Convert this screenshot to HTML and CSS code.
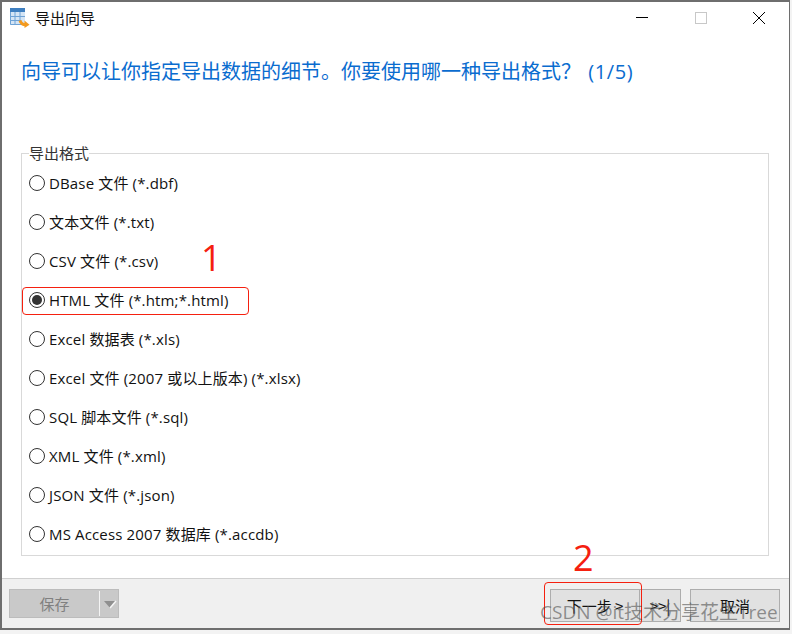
FILE: index.html
```html
<!DOCTYPE html>
<html lang="zh">
<head>
<meta charset="utf-8">
<title>导出向导</title>
<link rel="stylesheet" href="styles.css">
</head>
<body>
<div class="window">
  <header class="titlebar">
    <svg class="app-icon" width="20" height="20" viewBox="0 0 20 20">
      <rect x="0" y="0" width="15" height="4" fill="#3f7fc0"/>
      <rect x="0" y="4" width="15" height="13" fill="#d5e5f5"/>
      <path d="M0.5 4v12.5h14.5M5 4v13M10 4v9M0 8.5h15M0 12.5h11" fill="none" stroke="#6fa3d6" stroke-width="1"/>
      <path d="M10 12.5c1 3 3 4.3 5.5 4.3" fill="none" stroke="#f39a1e" stroke-width="3"/>
      <path d="M14.5 12.5l5 4.3-5 3.2z" fill="#f39a1e"/>
    </svg>
    <span class="title">导出向导</span>
    <div class="controls">
      <svg class="ctl" width="14" height="14" viewBox="0 0 14 14"><path d="M1 6.5h12" stroke="#000" stroke-width="1"/></svg>
      <svg class="ctl" width="14" height="14" viewBox="0 0 14 14"><rect x="1.5" y="1.5" width="11" height="11" fill="none" stroke="#c8c8c8"/></svg>
      <svg class="ctl" width="14" height="14" viewBox="0 0 14 14"><path d="M1 1l12 12M13 1L1 13" stroke="#000" stroke-width="1"/></svg>
    </div>
  </header>
  <h1 class="heading">向导可以让你指定导出数据的细节。你要使用哪一种导出格式？ <span class="step">(1/5)</span></h1>
  <main class="content">
    <fieldset class="group">
      <legend class="legend">导出格式</legend>
      <label class="row"><span class="radio"></span>DBase 文件 (*.dbf)</label>
      <label class="row"><span class="radio"></span>文本文件 (*.txt)</label>
      <label class="row"><span class="radio"></span>CSV 文件 (*.csv)</label>
      <label class="row"><span class="radio checked"></span>HTML 文件 (*.htm;*.html)</label>
      <label class="row"><span class="radio"></span>Excel 数据表 (*.xls)</label>
      <label class="row"><span class="radio"></span>Excel 文件 (2007 或以上版本) (*.xlsx)</label>
      <label class="row"><span class="radio"></span>SQL 脚本文件 (*.sql)</label>
      <label class="row"><span class="radio"></span>XML 文件 (*.xml)</label>
      <label class="row"><span class="radio"></span>JSON 文件 (*.json)</label>
      <label class="row"><span class="radio"></span>MS Access 2007 数据库 (*.accdb)</label>
    </fieldset>
  </main>
  <footer class="footer">
    <div class="save">
      <span class="save-label">保存</span>
      <svg class="save-arrow" width="14" height="10" viewBox="0 0 14 10">
        <path d="M1 1h12L7 8z" fill="#8f8f8f"/>
        <path d="M13 1L7 8" stroke="#f6f6f6" stroke-width="1.6"/>
      </svg>
    </div>
    <div class="nav">
      <button class="btn next">下一步 &gt;</button>
      <button class="btn last">&gt;&gt;|</button>
      <button class="btn cancel">取消</button>
    </div>
  </footer>
</div>
<div class="mark num-one">1</div>
<div class="mark num-two">2</div>
<div class="box box-html"></div>
<div class="box box-next"></div>
<div class="watermark">CSDN @it技术分享花生Tree</div>
</body>
</html>
```
FILE: styles.css
```css
* { box-sizing: border-box; }
html, body { margin: 0; padding: 0; }
body {
  position: relative;
  width: 792px;
  height: 634px;
  overflow: hidden;
  background: #f3f3f3;
  font-family: "Open Sans", "Noto Sans CJK SC", sans-serif;
  color: #111;
}
.window {
  width: 790px;
  height: 630px;
  background: #fff;
  border: 1px solid #6e6e6e;
  border-left-width: 2px;
  border-top-width: 2px;
  border-bottom-width: 2px;
  display: flex;
  flex-direction: column;
}
.titlebar {
  height: 31px;
  flex: none;
  display: flex;
  align-items: center;
  padding-left: 8px;
}
.app-icon { margin-right: 5px; }
.title { font-size: 15px; font-family: "Noto Sans CJK SC", sans-serif; }
.controls {
  margin-left: auto;
  display: flex;
  gap: 44.5px;
  padding-right: 23px;
}
.heading {
  margin: 0;
  padding: 24px 0 0 19px;
  height: 72px;
  flex: none;
  font-size: 20px;
  line-height: 30px;
  font-weight: 400;
  color: #0a6ccf;
  font-family: "Open Sans", "Noto Sans CJK SC", sans-serif;
}
.step { margin-left: 2px; letter-spacing: 0.6px; }
.content { flex: 1; padding: 39px 20px 22px 19px; display: flex; }
.group {
  margin: 0;
  padding: 1px 0 0 7px;
  width: 100%;
  border: 1px solid #d9d9d9;
  min-width: 0;
  display: flex;
  flex-direction: column;
}
.legend {
  padding: 0;
  margin-left: 0;
  font-size: 15px;
  line-height: 18px;
  color: #333;
  font-family: "Noto Sans CJK SC", sans-serif;
}
.row {
  height: 39px;
  display: flex;
  align-items: center;
  font-size: 15px;
  letter-spacing: 0.15px;
  flex: none;
}
.radio {
  width: 16px;
  height: 16px;
  border-radius: 50%;
  border: 1px solid #333;
  margin-right: 4px;
  background: #fff;
  flex: none;
  display: flex;
  align-items: center;
  justify-content: center;
}
.radio.checked::after {
  content: "";
  width: 10px;
  height: 10px;
  border-radius: 50%;
  background: #333;
}
.footer {
  height: 50px;
  flex: none;
  background: #f0f0f0;
  border-top: 1px solid #d0d0d0;
  padding: 10px 9px 0 7px;
  display: flex;
  justify-content: space-between;
}
.save {
  width: 110px;
  height: 29px;
  background: #c9c9c9;
  border: 1px solid #bcbcbc;
  display: flex;
  align-items: center;
  font-size: 15px;
  color: #808080;
  font-family: "Noto Sans CJK SC", sans-serif;
}
.save-label {
  width: 90px;
  height: 25px;
  line-height: 25px;
  text-align: center;
  border-right: 1px solid #f4f4f4;
}
.save-arrow { margin-left: 3px; margin-top: 2px; }
.nav { display: flex; height: 33px; }
.btn {
  height: 33px;
  margin: 0;
  padding: 0;
  background: #e1e1e1;
  border: 1px solid #adadad;
  font-size: 15px;
  color: #111;
  font-family: "Noto Sans CJK SC", sans-serif;
}
.next { width: 90px; }
.last { width: 42px; margin-left: -1px; margin-right: 9px; }
.cancel { width: 90px; }
.mark {
  position: absolute;
  color: #f5200f;
  font-size: 36px;
  line-height: 40px;
  font-family: "Open Sans", sans-serif;
}
.num-one { left: 201px; top: 238px; }
.num-two { left: 573px; top: 538px; }
.box {
  position: absolute;
  border: 1px solid #f5200f;
  border-radius: 4px;
}
.box-html { left: 22px; top: 287px; width: 227px; height: 28px; }
.box-next { left: 544px; top: 582px; width: 98px; height: 43px; }
.watermark {
  position: absolute;
  left: 540px;
  top: 598px;
  font-size: 19px;
  line-height: 28px;
  white-space: nowrap;
  color: rgba(80, 80, 80, 0.6);
  font-family: "Open Sans", "Noto Sans CJK SC", sans-serif;
}
```
